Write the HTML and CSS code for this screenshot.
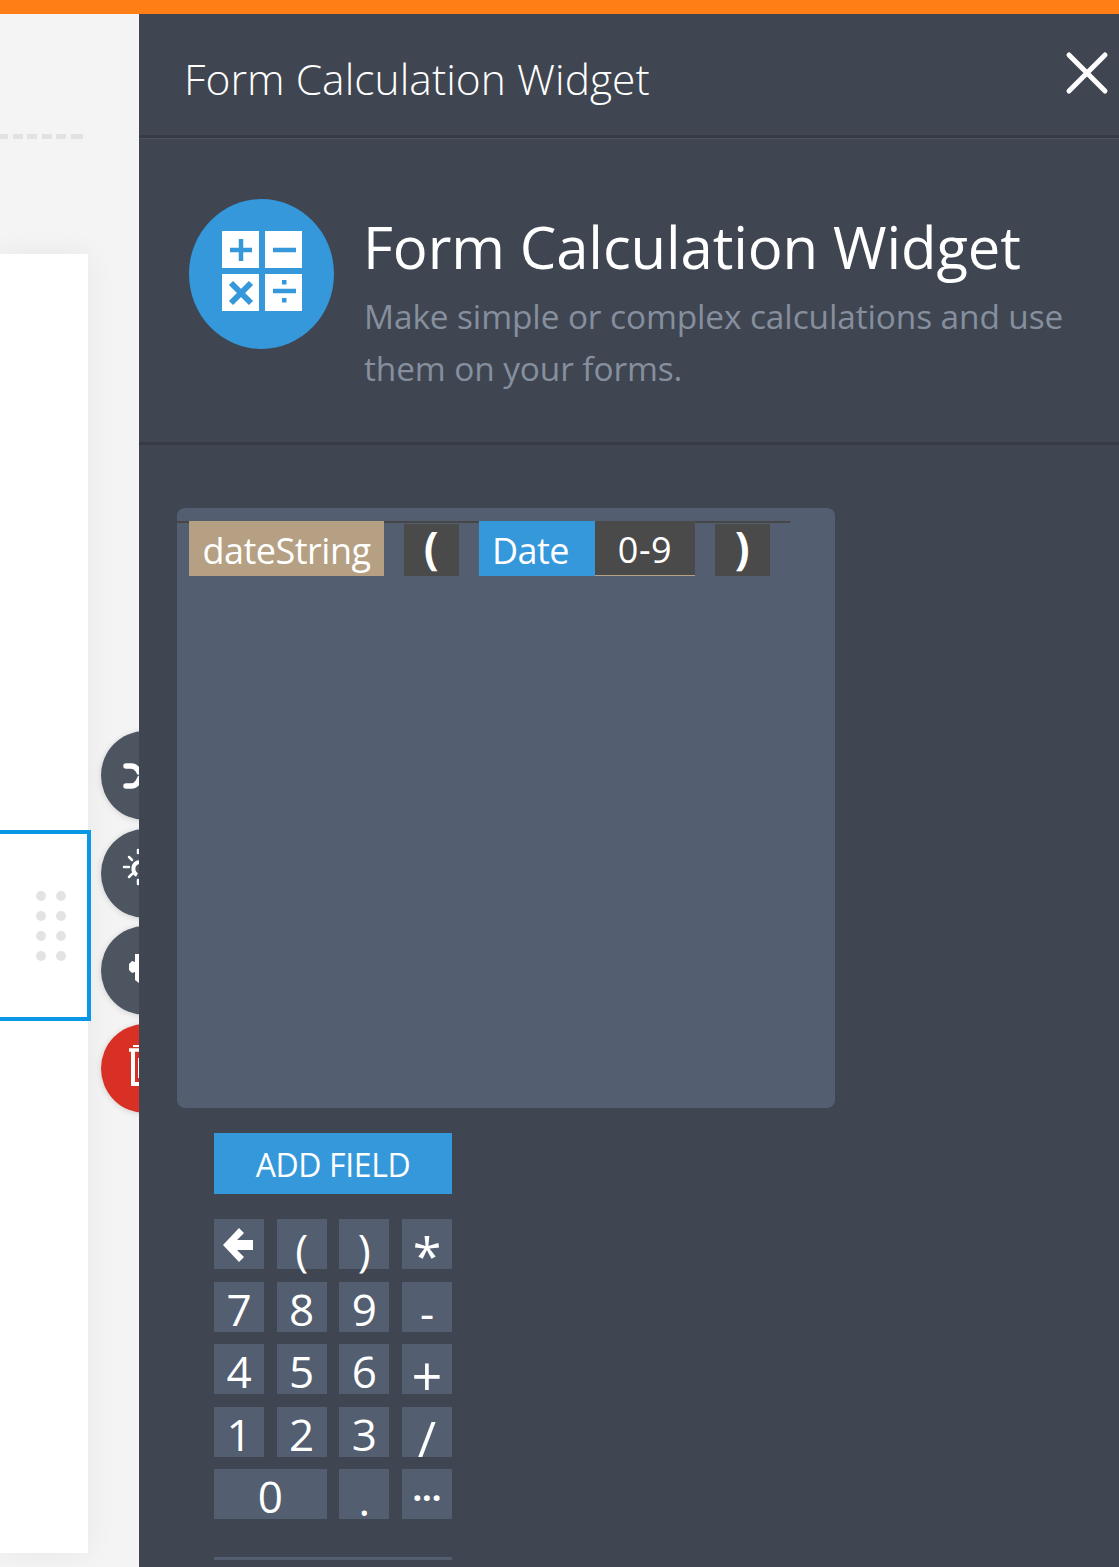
FILE: index.html
```html
<!DOCTYPE html>
<html lang="en">
  <head>
    <meta charset="UTF-8" />
    <title>Form Calculation Widget</title>
    <link rel="stylesheet" href="styles.css">
  </head>
  <body>
    <div class="top-bar"></div>
    <div class="main">
      <div class="canvas">
        <div class="dashes"></div>
        <div class="sheet"></div>
        <div class="selected">
          <div class="grip">
            <span></span><span></span><span></span><span></span>
            <span></span><span></span><span></span><span></span>
          </div>
        </div>
        <div class="tools">
          <div class="tool">
            <svg width="88" height="89" viewBox="0 0 88 89"><path d="M25 35h5c3 0 5 1 7 4l1 2M25 55h5c3 0 5-1 7-4l2-4" fill="none" stroke="#fff" stroke-width="5.500" stroke-linecap="round"/></svg>
          </div>
          <div class="tool">
            <svg width="88" height="89" viewBox="0 0 88 89"><path d="M38 33a7 7 0 0 0-2 13" fill="none" stroke="#fff" stroke-width="4"/><path d="M23 38h5M28 28l3 3M28 48l3-3M37 21v3M37 51v4" stroke="#fff" stroke-width="2.500" stroke-linecap="round"/></svg>
          </div>
          <div class="tool">
            <svg width="88" height="89" viewBox="0 0 88 89"><path d="M38 28h-4v8l-3-1-3 3v6l3 3 3-1v8l4 3z" fill="#fff"/></svg>
          </div>
          <div class="tool danger">
            <svg width="88" height="89" viewBox="0 0 88 89"><path d="M32 27v33h7" fill="none" stroke="#fff" stroke-width="4"/><path d="M28 26h11" stroke="#fff" stroke-width="3.500"/><path d="M32 22h7" stroke="#fff" stroke-width="2"/><path d="M38 34v20" stroke="#fff" stroke-width="2"/></svg>
          </div>
        </div>
      </div>

      <div class="panel">
        <div class="panel-head">
          <h2>Form Calculation Widget</h2>
          <svg class="close" width="44" height="44" viewBox="0 0 44 44"><path d="M4 4l36 36M40 4L4 40" stroke="#fff" stroke-width="5" stroke-linecap="round"/></svg>
        </div>

        <div class="intro">
          <svg class="logo" width="145" height="150" viewBox="0 0 145 150">
            <ellipse cx="72.5" cy="75" rx="72.5" ry="75" fill="#3498db"/>
            <rect x="33" y="32" width="37" height="37" fill="#fff"/>
            <rect x="76" y="32" width="37" height="37" fill="#fff"/>
            <rect x="33" y="75" width="37" height="37" fill="#fff"/>
            <rect x="76" y="75" width="37" height="37" fill="#fff"/>
            <path d="M41 51h22M52 40v22M84 51h23M84 92h23" stroke="#3498db" stroke-width="4.500" fill="none"/>
            <path d="M42 84l20 20M62 84l-20 20" stroke="#3498db" stroke-width="6" fill="none"/>
            <rect x="93" y="81" width="4.500" height="4.500" fill="#3498db"/>
            <rect x="93" y="99" width="4.500" height="4.500" fill="#3498db"/>
          </svg>
          <div class="intro-text">
            <h1>Form Calculation Widget</h1>
            <p>Make simple or complex calculations and use them on your forms.</p>
          </div>
        </div>

        <div class="body">
          <div class="editor">
            <div class="tokens">
              <div class="token fn">dateString</div>
              <div class="token op">(</div>
              <div class="field">
                <div class="token date">Date</div>
                <div class="token range">0-9</div>
              </div>
              <div class="token op">)</div>
            </div>
          </div>

          <div class="controls">
            <button class="add-btn">ADD FIELD</button>
            <div class="keys">
              <div class="key arrow">
                <svg width="32" height="34" viewBox="0 0 32 34"><path d="M16 0l5 5-7 7h16v10H14l7 7-5 5L0 17z" fill="#fff"/></svg>
              </div>
              <div class="key low">(</div>
              <div class="key low">)</div>
              <div class="key star">*</div>
              <div class="key">7</div>
              <div class="key">8</div>
              <div class="key">9</div>
              <div class="key low">-</div>
              <div class="key">4</div>
              <div class="key">5</div>
              <div class="key">6</div>
              <div class="key plus">+</div>
              <div class="key">1</div>
              <div class="key">2</div>
              <div class="key">3</div>
              <div class="key slash">/</div>
              <div class="key wide">0</div>
              <div class="key low">.</div>
              <div class="key dots">...</div>
            </div>
            <div class="rule"></div>
          </div>
        </div>
      </div>
    </div>
  </body>
</html>
```

FILE: styles.css
```css
* {
  margin: 0;
  padding: 0;
  box-sizing: border-box;
}

html,
body {
  height: 1567px;
  overflow: hidden;
}

body {
  font-family: "Open Sans", "Noto Sans", sans-serif;
  background: #f5f4f4;
}

.top-bar {
  height: 14px;
  background: #ff7f16;
}

.main {
  display: flex;
  height: 1553px;
}

/* left side, the form behind the panel */
.canvas {
  position: relative;
  width: 139px;
  flex-shrink: 0;
}

.dashes {
  margin-top: 120px;
  width: 83px;
  height: 5px;
  background: repeating-linear-gradient(90deg, #e2e2e2 0 10px, transparent 10px 14.600px);
  background-position: -2px 0;
}

.sheet {
  margin-top: 115px;
  width: 88px;
  height: 1299px;
  background: #fff;
  box-shadow: 0 0 30px rgba(0, 0, 0, 0.06);
}

.selected {
  position: absolute;
  top: 816px;
  left: -4px;
  width: 95px;
  height: 191px;
  border: 4px solid #0a97e6;
  background: #fff;
}

.grip {
  position: absolute;
  top: 57px;
  left: 36px;
  display: grid;
  grid-template-columns: 10px 10px;
  gap: 10px;
}

.grip span {
  width: 10px;
  height: 10px;
  border-radius: 50%;
  background: #e3e3e3;
}

.tools {
  position: absolute;
  top: 717px;
  left: 101px;
  display: flex;
  flex-direction: column;
  gap: 8.700px;
}

.tool {
  width: 88px;
  height: 89px;
  border-radius: 50%;
  background: #4c5560;
  box-shadow: 0 1px 6px rgba(0, 0, 0, 0.15);
}

.tool.danger {
  background: #d93025;
}

/* right panel */
.panel {
  position: relative;
  flex: 1;
  background: #3f4651;
  color: #fff;
}

.panel-head {
  display: flex;
  align-items: center;
  justify-content: space-between;
  height: 124px;
  padding: 0 10px 0 45px;
  border-bottom: 3px solid #363b46;
  box-shadow: 0 1px 0 #4b515d;
}

.panel-head h2 {
  font-size: 42.500px;
  font-weight: 300;
  letter-spacing: 0.05px;
  margin-top: 7px;
}

.close {
  margin-top: -4px;
}

.intro {
  display: flex;
  gap: 29px;
  height: 307px;
  padding: 61px 40px 0 50px;
  border-bottom: 3px solid #363b46;
}

.logo {
  flex-shrink: 0;
}

.intro-text h1 {
  font-size: 58px;
  font-weight: 400;
  line-height: 78px;
  letter-spacing: -0.1px;
  white-space: nowrap;
  margin-top: 9px;
}

.intro-text p {
  font-size: 33.400px;
  line-height: 52px;
  color: #868f9e;
  letter-spacing: -0.1px;
  margin: 4px 0 0 1px;
}

.body {
  padding: 63px 0 0 38px;
}

.editor {
  width: 658px;
  height: 600px;
  background: #535e70;
  border-radius: 8px;
  padding-top: 13px;
}

.tokens {
  display: flex;
  gap: 20px;
  width: 613px;
  height: 55px;
  padding-left: 12px;
  border-top: 2px solid #464646;
}

.token {
  display: flex;
  align-items: center;
  justify-content: center;
  height: 55px;
  margin-top: -2px;
  padding-top: 3px;
  font-size: 36px;
  letter-spacing: -0.5px;
}

.fn {
  width: 195px;
  background: #b5a084;
}

.op {
  width: 55px;
  height: 52px;
  margin-top: 1px;
  padding: 0 1px 6px 0;
  background: #4a4a4a;
  font-size: 44px;
  font-weight: 700;
}

.field {
  display: flex;
}

.date {
  width: 116px;
  padding-right: 13px;
  background: #3498db;
}

.range {
  width: 100px;
  background: #4a4a4a;
  border-bottom: 1px solid #b5a084;
  letter-spacing: 0.6px;
}

.controls {
  width: 238px;
  margin: 25px 0 0 37px;
}

.add-btn {
  display: block;
  width: 100%;
  height: 61px;
  padding-top: 2px;
  border: none;
  background: #3498db;
  color: #fff;
  font-family: inherit;
  font-size: 32px;
  letter-spacing: -0.4px;
}

.keys {
  display: grid;
  grid-template-columns: repeat(4, 50px);
  grid-auto-rows: 50px;
  column-gap: 12.670px;
  row-gap: 12.500px;
  margin-top: 25px;
}

.key {
  display: flex;
  align-items: center;
  justify-content: center;
  padding-top: 4px;
  background: #535e70;
  font-size: 44px;
  line-height: 1;
  overflow: visible;
}

.key.arrow {
  padding-top: 2px;
}

.key.low {
  padding-top: 10px;
}

.key.star {
  padding-top: 22px;
  font-size: 52px;
  font-weight: 400;
}

.key.plus {
  padding-top: 12px;
  font-size: 54px;
}

.key.slash {
  padding-top: 12px;
  font-size: 50px;
}

.key.wide {
  grid-column: span 2;
}

.key.dots {
  padding: 0 0 12px;
  font-size: 34px;
  font-weight: 700;
}

.rule {
  height: 3px;
  background: #535e70;
  margin-top: 38px;
}
```
